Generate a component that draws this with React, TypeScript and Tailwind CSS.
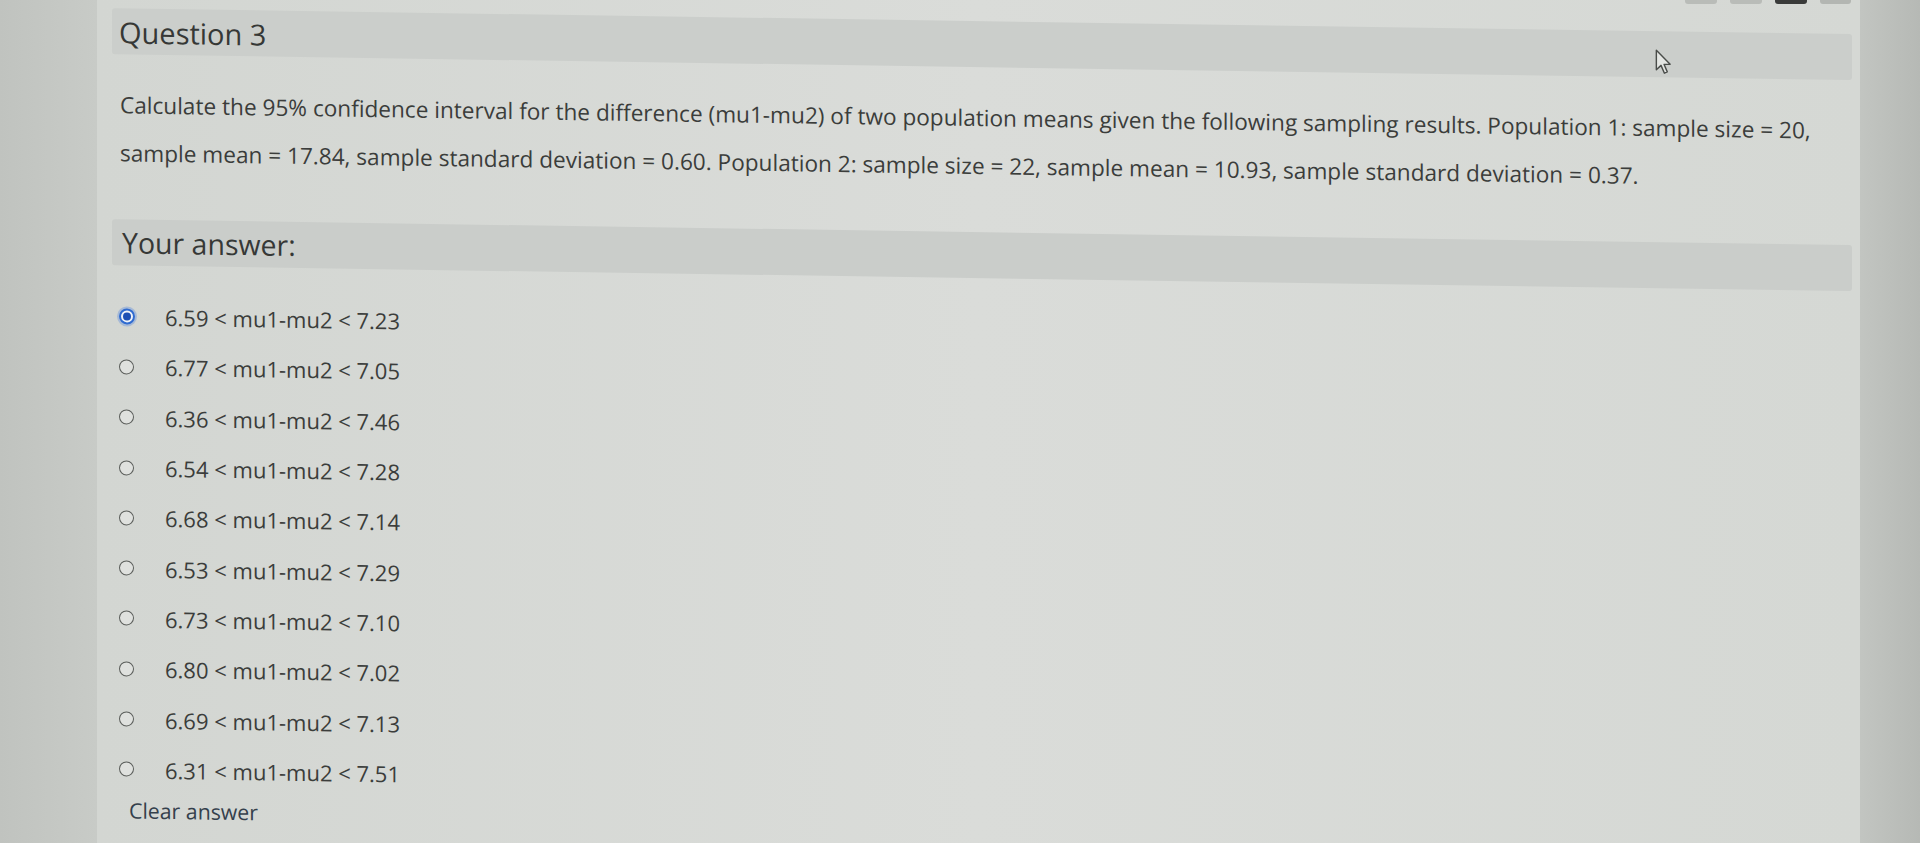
import { useState } from "react";

const options = [
  "6.59 < mu1-mu2 < 7.23",
  "6.77 < mu1-mu2 < 7.05",
  "6.36 < mu1-mu2 < 7.46",
  "6.54 < mu1-mu2 < 7.28",
  "6.68 < mu1-mu2 < 7.14",
  "6.53 < mu1-mu2 < 7.29",
  "6.73 < mu1-mu2 < 7.10",
  "6.80 < mu1-mu2 < 7.02",
  "6.69 < mu1-mu2 < 7.13",
  "6.31 < mu1-mu2 < 7.51",
];

function Radio({ checked }: { checked: boolean }) {
  if (checked) {
    return (
      <span className="flex h-[16px] w-[16px] items-center justify-center rounded-full border-2 border-[#2f6bd0] bg-[#eef2f8] shadow-[0_0_0_2px_rgba(110,150,220,0.45)]">
        <span className="h-[8px] w-[8px] rounded-full bg-[#1c4fb4]" />
      </span>
    );
  }
  return (
    <span className="h-[15px] w-[15px] rounded-full border-[1.8px] border-[#5a5d5a] bg-[#dfe1de]" />
  );
}

function Cursor() {
  return (
    <svg width="19" height="26" viewBox="0 0 13 20" className="block">
      <path
        d="M1 1 L1 16 L4.6 12.6 L7.2 18.6 L9.4 17.6 L6.9 11.8 L11.6 11.8 Z"
        fill="#e4e6e3"
        stroke="#4a4d4a"
        strokeWidth="1.1"
        strokeLinejoin="round"
      />
    </svg>
  );
}

export default function App() {
  const [selected, setSelected] = useState(0);

  return (
    <div className="flex h-[843px] w-[1920px] overflow-hidden bg-[#c4c7c3] font-['Open_Sans',sans-serif] text-[#3b3d3b]">
      <div className="w-[97px] shrink-0 bg-gradient-to-r from-[#c0c3bf] to-[#c8cbc7]" />

      <div className="relative w-[1763px] shrink-0 bg-gradient-to-r from-[#d3d6d2] via-[#dadcd9] to-[#d5d8d4]">
        <div className="absolute top-0 left-[1588px] z-10 flex gap-[13px]">
          <div className="h-[4px] w-[32px] rounded-b-[3px] bg-[#b9bcb8]" />
          <div className="h-[4px] w-[32px] rounded-b-[3px] bg-[#b9bcb8]" />
          <div className="h-[4px] w-[32px] rounded-b-[3px] bg-[#3a3b3a]" />
          <div className="h-[4px] w-[31px] rounded-b-[3px] bg-[#b3b6b2]" />
        </div>

        <div className="absolute top-[49px] left-[1557px] z-10">
          <Cursor />
        </div>

        <div className="origin-top-left skew-y-[0.85deg] pt-[8px] pr-[8px] pl-[15px]">
          <div className="flex h-[46px] items-center rounded-[3px] bg-[#cbcecb] pl-[7px]">
            <h2 className="text-[29px] leading-none font-normal text-[#363836]">
              Question 3
            </h2>
          </div>

          <p className="mt-[27px] w-[1740px] pl-[8px] text-[22.6px] leading-[48px]">
            Calculate the 95% confidence interval for the difference (mu1-mu2) of two population means given the following sampling results. Population 1: sample size = 20, sample mean = 17.84, sample standard deviation = 0.60. Population 2: sample size = 22, sample mean = 10.93, sample standard deviation = 0.37.
          </p>

          <div className="mt-[42px] flex h-[46px] items-center rounded-[3px] bg-[#cacdca] pl-[10px]">
            <h3 className="text-[28.5px] leading-none font-normal text-[#363836]">
              Your answer:
            </h3>
          </div>

          <div className="mt-[26px] flex flex-col pl-[7px]">
            {options.map((o, i) => (
              <label
                key={o}
                className="flex h-[50.3px] cursor-pointer items-center"
                onClick={() => setSelected(i)}
              >
                <span className="flex w-[46px] items-center">
                  <Radio checked={selected === i} />
                </span>
                <span className="text-[22px] leading-none">{o}</span>
              </label>
            ))}
          </div>

          <div className="mt-[2px] pl-[17px] text-[21.3px] leading-[28px] text-[#34404c]">
            Clear answer
          </div>
        </div>
      </div>

      <div className="flex-1 bg-gradient-to-r from-[#c2c5c1] to-[#b6b9b5]" />
    </div>
  );
}
